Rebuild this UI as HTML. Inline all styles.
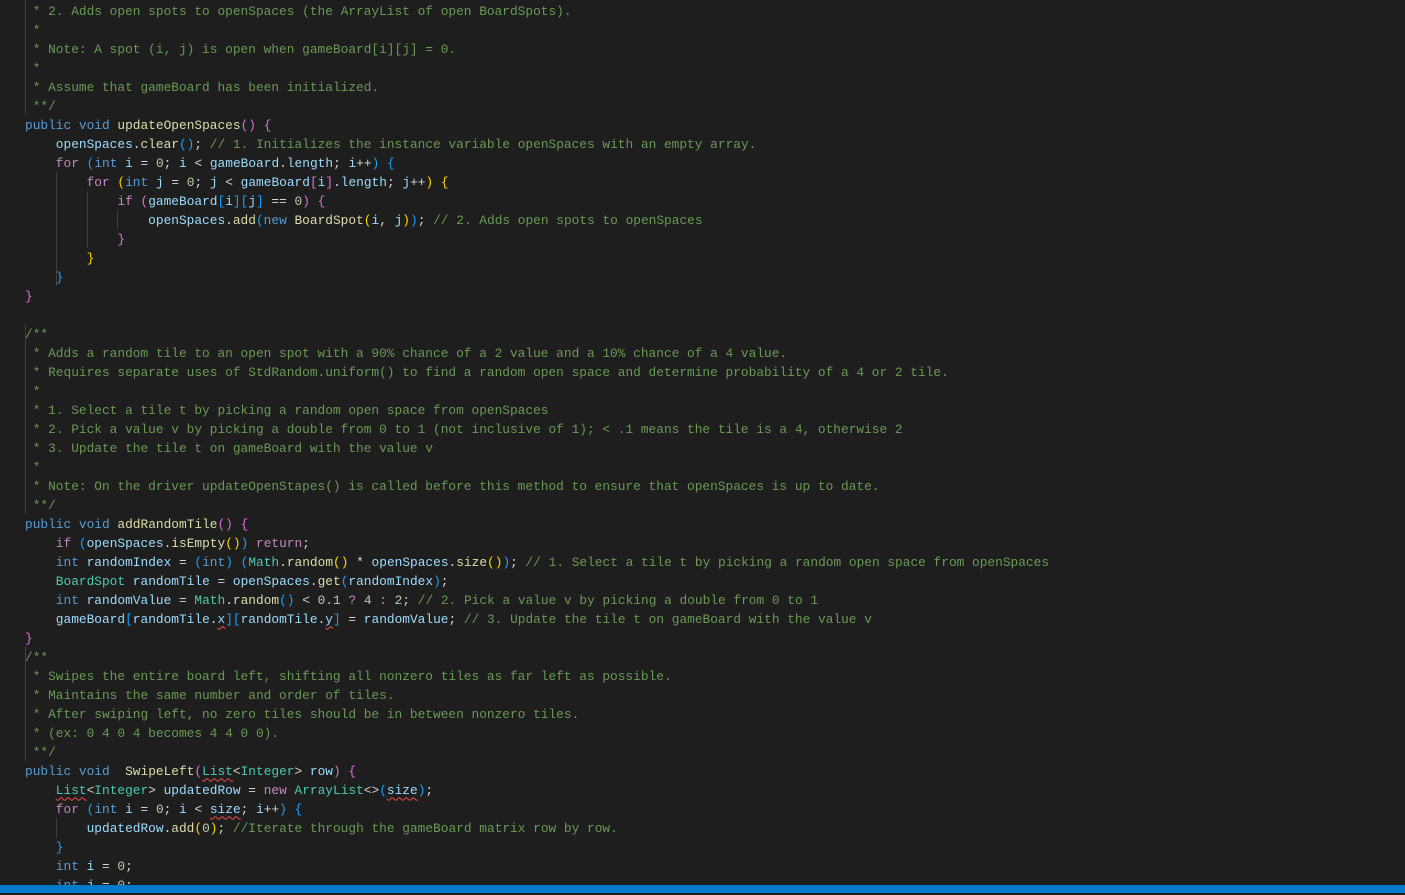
<!DOCTYPE html>
<html><head><meta charset="utf-8"><style>
html,body{margin:0;padding:0;background:#1e1e1e;width:1405px;height:893px;overflow:hidden}
pre{position:absolute;left:25px;top:1.5px;margin:0;font-family:"Liberation Mono",monospace;font-size:12.83px;line-height:19px;color:#d4d4d4;white-space:pre}
.k{color:#569cd6}.c{color:#c586c0}.f{color:#dcdcaa}.v{color:#9cdcfe}.t{color:#4ec9b0}.n{color:#b5cea8}.m{color:#6a9955}
.b1{color:#ffd700}.b2{color:#da70d6}.b3{color:#179fff}
.sq{text-decoration:underline wavy #f14c4c;text-decoration-thickness:1px;text-underline-offset:3px}
.g{position:absolute;width:1px;background:#404040}
.status{position:absolute;left:0;top:885px;width:1405px;height:8px;background:#007acc}
</style></head><body>
<div class="g" style="left:25px;top:0;height:115px"></div>
<div class="g" style="left:25px;top:324px;height:190px"></div>
<div class="g" style="left:25px;top:647px;height:114px"></div>
<div class="g" style="left:56px;top:172px;height:114px"></div>
<div class="g" style="left:87px;top:191px;height:57px"></div>
<div class="g" style="left:117px;top:210px;height:19px"></div>
<div class="g" style="left:56px;top:818px;height:20px"></div>
<pre><span class="m"> * 2. Adds open spots to openSpaces (the ArrayList of open BoardSpots).</span>
<span class="m"> *</span>
<span class="m"> * Note: A spot (i, j) is open when gameBoard[i][j] = 0.</span>
<span class="m"> *</span>
<span class="m"> * Assume that gameBoard has been initialized.</span>
<span class="m"> **/</span>
<span class="k">public</span> <span class="k">void</span> <span class="f">updateOpenSpaces</span><span class="b2">()</span> <span class="b2">{</span>
    <span class="v">openSpaces</span>.<span class="f">clear</span><span class="b3">()</span>; <span class="m">// 1. Initializes the instance variable openSpaces with an empty array.</span>
    <span class="c">for</span> <span class="b3">(</span><span class="k">int</span> <span class="v">i</span> = <span class="n">0</span>; <span class="v">i</span> &lt; <span class="v">gameBoard</span>.<span class="v">length</span>; <span class="v">i</span>++<span class="b3">)</span> <span class="b3">{</span>
        <span class="c">for</span> <span class="b1">(</span><span class="k">int</span> <span class="v">j</span> = <span class="n">0</span>; <span class="v">j</span> &lt; <span class="v">gameBoard</span><span class="b2">[</span><span class="v">i</span><span class="b2">]</span>.<span class="v">length</span>; <span class="v">j</span>++<span class="b1">)</span> <span class="b1">{</span>
            <span class="c">if</span> <span class="b2">(</span><span class="v">gameBoard</span><span class="b3">[</span><span class="v">i</span><span class="b3">][</span><span class="v">j</span><span class="b3">]</span> == <span class="n">0</span><span class="b2">)</span> <span class="b2">{</span>
                <span class="v">openSpaces</span>.<span class="f">add</span><span class="b3">(</span><span class="k">new</span> <span class="f">BoardSpot</span><span class="b1">(</span><span class="v">i</span>, <span class="v">j</span><span class="b1">)</span><span class="b3">)</span>; <span class="m">// 2. Adds open spots to openSpaces</span>
            <span class="b2">}</span>
        <span class="b1">}</span>
    <span class="b3">}</span>
<span class="b2">}</span>

<span class="m">/**</span>
<span class="m"> * Adds a random tile to an open spot with a 90% chance of a 2 value and a 10% chance of a 4 value.</span>
<span class="m"> * Requires separate uses of StdRandom.uniform() to find a random open space and determine probability of a 4 or 2 tile.</span>
<span class="m"> *</span>
<span class="m"> * 1. Select a tile t by picking a random open space from openSpaces</span>
<span class="m"> * 2. Pick a value v by picking a double from 0 to 1 (not inclusive of 1); &lt; .1 means the tile is a 4, otherwise 2</span>
<span class="m"> * 3. Update the tile t on gameBoard with the value v</span>
<span class="m"> *</span>
<span class="m"> * Note: On the driver updateOpenStapes() is called before this method to ensure that openSpaces is up to date.</span>
<span class="m"> **/</span>
<span class="k">public</span> <span class="k">void</span> <span class="f">addRandomTile</span><span class="b2">()</span> <span class="b2">{</span>
    <span class="c">if</span> <span class="b3">(</span><span class="v">openSpaces</span>.<span class="f">isEmpty</span><span class="b1">()</span><span class="b3">)</span> <span class="c">return</span>;
    <span class="k">int</span> <span class="v">randomIndex</span> = <span class="b3">(</span><span class="k">int</span><span class="b3">)</span> <span class="b3">(</span><span class="t">Math</span>.<span class="f">random</span><span class="b1">()</span> * <span class="v">openSpaces</span>.<span class="f">size</span><span class="b1">()</span><span class="b3">)</span>; <span class="m">// 1. Select a tile t by picking a random open space from openSpaces</span>
    <span class="t">BoardSpot</span> <span class="v">randomTile</span> = <span class="v">openSpaces</span>.<span class="f">get</span><span class="b3">(</span><span class="v">randomIndex</span><span class="b3">)</span>;
    <span class="k">int</span> <span class="v">randomValue</span> = <span class="t">Math</span>.<span class="f">random</span><span class="b3">()</span> &lt; <span class="n">0.1</span> <span class="c">?</span> <span class="n">4</span> <span class="c">:</span> <span class="n">2</span>; <span class="m">// 2. Pick a value v by picking a double from 0 to 1</span>
    <span class="v">gameBoard</span><span class="b3">[</span><span class="v">randomTile</span>.<span class="v sq">x</span><span class="b3">][</span><span class="v">randomTile</span>.<span class="v sq">y</span><span class="b3">]</span> = <span class="v">randomValue</span>; <span class="m">// 3. Update the tile t on gameBoard with the value v</span>
<span class="b2">}</span>
<span class="m">/**</span>
<span class="m"> * Swipes the entire board left, shifting all nonzero tiles as far left as possible.</span>
<span class="m"> * Maintains the same number and order of tiles.</span>
<span class="m"> * After swiping left, no zero tiles should be in between nonzero tiles.</span>
<span class="m"> * (ex: 0 4 0 4 becomes 4 4 0 0).</span>
<span class="m"> **/</span>
<span class="k">public</span> <span class="k">void</span>  <span class="f">SwipeLeft</span><span class="b2">(</span><span class="t sq">List</span>&lt;<span class="t">Integer</span>&gt; <span class="v">row</span><span class="b2">)</span> <span class="b2">{</span>
    <span class="t sq">List</span>&lt;<span class="t">Integer</span>&gt; <span class="v">updatedRow</span> = <span class="c">new</span> <span class="t">ArrayList</span>&lt;&gt;<span class="b3">(</span><span class="v sq">size</span><span class="b3">)</span>;
    <span class="c">for</span> <span class="b3">(</span><span class="k">int</span> <span class="v">i</span> = <span class="n">0</span>; <span class="v">i</span> &lt; <span class="v sq">size</span>; <span class="v">i</span>++<span class="b3">)</span> <span class="b3">{</span>
        <span class="v">updatedRow</span>.<span class="f">add</span><span class="b1">(</span><span class="n">0</span><span class="b1">)</span>; <span class="m">//Iterate through the gameBoard matrix row by row.</span>
    <span class="b3">}</span>
    <span class="k">int</span> <span class="v">i</span> = <span class="n">0</span>;
    <span class="k">int</span> <span class="v">j</span> = <span class="n">0</span>;</pre>
<div class="status"></div>
</body></html>
